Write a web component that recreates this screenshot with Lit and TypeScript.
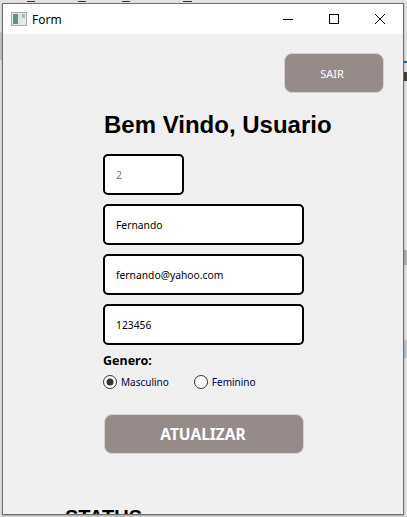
import { LitElement, html, css } from "lit";
import { customElement } from "lit/decorators.js";

@customElement("app-root")
export class AppRoot extends LitElement {
  static styles = css`
    :host {
      display: block; width: 407px; height: 517px; overflow: hidden;
      background-color: #e2e2e2;
      background-image:
        linear-gradient(#333, #333), linear-gradient(#333, #333), linear-gradient(#333, #333), linear-gradient(#333, #333),
        linear-gradient(#1a6fc0, #1a6fc0), linear-gradient(#4a3a30, #4a3a30), linear-gradient(#b0b0b0, #b0b0b0), linear-gradient(#bcc4d0, #bcc4d0), linear-gradient(#c4c4c4, #c4c4c4);
      background-size: 8px 1px, 8px 1px, 8px 1px, 9px 1px, 3px 2px, 3px 9px, 3px 15px, 3px 18px, 2px 28px;
      background-position: 27px 1px, 78px 1px, 122px 1px, 183px 1px, 404px 61px, 404px 72px, 404px 250px, 404px 340px, 0 32px;
      background-repeat: no-repeat;
    }
    .window {
      box-sizing: border-box; width: 402px; height: 512px; margin: 3px 0 0 2px;
      border: 1px solid #707070; background: #f0f0f0; overflow: hidden;
      display: flex; flex-direction: column;
      font-family: "Noto Sans", sans-serif; font-size: 10.3px; color: #000;
      box-shadow: 0 1px 2px rgba(0,0,0,.3);
    }
    .titlebar { height: 30px; flex: none; background: #fff; display: flex; align-items: center; padding-left: 8px; font-size: 12px; }
    .appicon { width: 16px; height: 16px; margin-right: 5px; }
    .title { flex: 1; }
    .ctl { width: 46px; height: 30px; display: flex; align-items: center; justify-content: center; }
    .ctl svg { width: 12px; height: 12px; }
    .content { flex: 1; display: flex; flex-direction: column; align-items: flex-start; padding: 19px 0 0 100px; }
    .btn { box-sizing: border-box; display: flex; align-items: center; justify-content: center; background: #968b89; color: #fff; border: 1px solid #d6d2d1; }
    .sair { width: 100px; height: 40px; border-radius: 8px; margin-left: 181px; font-size: 11px; padding-right: 4px; }
    h1 { margin: 18px 0 0 1px; font: bold 24px/28px "Liberation Sans", sans-serif; }
    .field { box-sizing: border-box; width: 201px; height: 41px; border: 2px solid #000; border-radius: 5px; background: #fff; display: flex; align-items: center; padding-left: 11px; margin-top: 9px; }
    .field.first { width: 81px; margin-top: 15px; color: #5f7f7f; }
    .label { margin-top: 7px; font-weight: 700; font-size: 12.5px; line-height: 17px; }
    .radios { display: flex; margin-top: 5px; height: 16px; align-items: center; color: #000040; font-size: 10px; }
    .radio { display: flex; align-items: center; gap: 4px; }
    .radio + .radio { margin-left: 25px; }
    .radio svg { width: 14px; height: 14px; }
    .atualizar { width: 200px; height: 40px; border-radius: 8px; margin: 24px 0 0 1px; font-size: 15.5px; font-weight: 700; padding-right: 2px; }
    .status { margin: 52px 0 0 -38px; font: bold 20px/23px "Liberation Sans", sans-serif; }
  `;

  render() {
    return html`
      <div class="window">
        <div class="titlebar">
          <svg class="appicon" viewBox="0 0 16 16">
            <rect x="0.5" y="1.5" width="15" height="13" fill="#e6ebee" stroke="#a9a9a9"/>
            <rect x="2" y="3" width="5" height="10" fill="#5f9488"/>
            <rect x="7" y="3" width="4" height="10" fill="#dfe4e6"/>
            <rect x="11" y="3" width="3" height="4" fill="#9cc0b8"/>
          </svg>
          <span class="title">Form</span>
          <div class="ctl"><svg viewBox="0 0 12 12"><path d="M1 6.5h10" stroke="#000" fill="none"/></svg></div>
          <div class="ctl"><svg viewBox="0 0 12 12"><rect x="1.5" y="1.5" width="9" height="9" stroke="#000" fill="none"/></svg></div>
          <div class="ctl"><svg viewBox="0 0 12 12"><path d="M1 1l10 10M11 1L1 11" stroke="#000" fill="none"/></svg></div>
        </div>
        <div class="content">
          <div class="btn sair">SAIR</div>
          <h1>Bem Vindo, Usuario</h1>
          <div class="field first">2</div>
          <div class="field">Fernando</div>
          <div class="field">fernando@yahoo.com</div>
          <div class="field">123456</div>
          <div class="label">Genero:</div>
          <div class="radios">
            <div class="radio">
              <svg viewBox="0 0 14 14"><circle cx="7" cy="7" r="6.5" fill="#fff" stroke="#333"/><circle cx="7" cy="7" r="3.5" fill="#333"/></svg>
              <span>Masculino</span>
            </div>
            <div class="radio">
              <svg viewBox="0 0 14 14"><circle cx="7" cy="7" r="6.5" fill="#fff" stroke="#333"/></svg>
              <span>Feminino</span>
            </div>
          </div>
          <div class="btn atualizar">ATUALIZAR</div>
          <div class="status">STATUS</div>
        </div>
      </div>
    `;
  }
}
